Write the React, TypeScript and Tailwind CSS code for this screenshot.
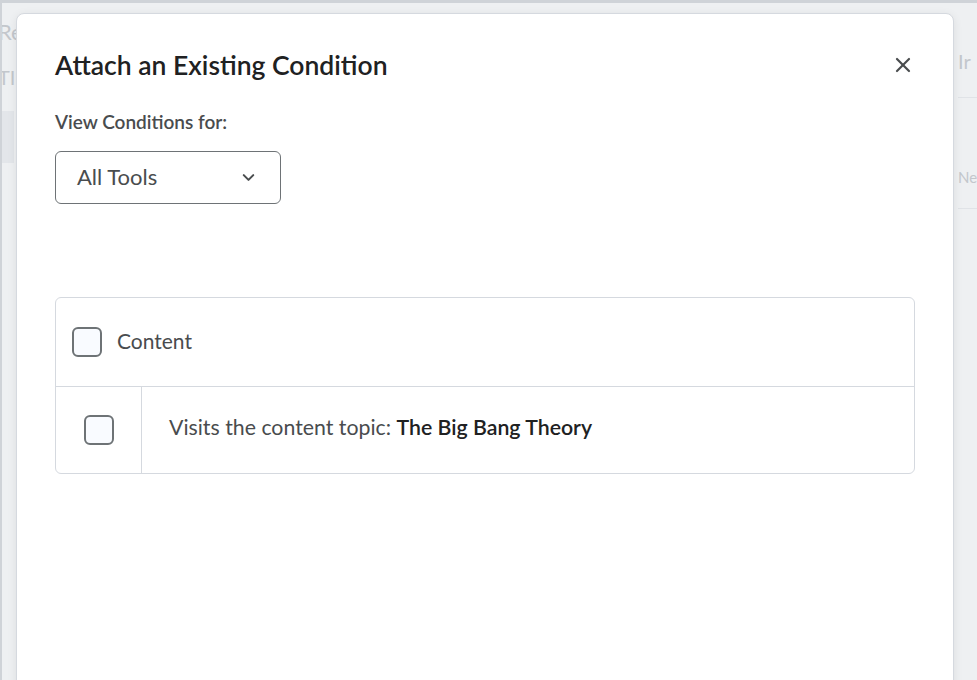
import { X, ChevronDown } from 'lucide-react';

const font = { fontFamily: 'Lato, "Open Sans", "Liberation Sans", sans-serif' };

const Checkbox = () => (
  <span className="inline-block h-[30px] w-[30px] shrink-0 rounded-[6px] border-2 border-[#6e7376] bg-[#f9fbff]" />
);

export default function App() {
  return (
    <div
      className="relative h-[680px] w-[977px] overflow-hidden border-l-2 border-t-[3px] border-[#cfd3d8] bg-[#eef0f2]"
      style={font}
    >
      {/* faded page behind the dialog */}
      <div className="flex h-full justify-between text-[#c3c7cc]">
        <div className="flex flex-col -ml-[4px]">
          <div className="mt-[16px] text-[22px] leading-[26px]">Re</div>
          <div className="mt-[20px] text-[20px] leading-[24px]">TI</div>
          <div className="mt-[22px] h-[52px] w-[16px] bg-[#e3e6ea]" />
        </div>
        <div className="flex flex-col items-start pl-[5px] w-[24px] overflow-hidden">
          <div className="mt-[46px] text-[20px] leading-[24px]">Ir</div>
          <div className="mt-[24px] h-[1px] w-full bg-[#e0e3e7]" />
          <div className="mt-[70px] text-[15px] leading-[18px]">Ne</div>
          <div className="mt-[22px] h-[1px] w-full bg-[#e0e3e7]" />
        </div>
      </div>

      {/* dialog */}
      <div className="absolute left-[14px] top-[10px] h-[720px] w-[938px] rounded-[8px] border border-[#d5d9df] bg-white shadow-[0_2px_10px_rgba(0,0,0,0.08)]">
        <div className="flex items-start justify-between pl-[38px] pr-[38px] pt-[35px]">
          <h1 className="text-[26.5px] font-semibold leading-[32px] text-[#202122]">
            Attach an Existing Condition
          </h1>
          <button className="mt-[4px] text-[#494c4e]">
            <X size={24} strokeWidth={2.2} />
          </button>
        </div>

        <div className="pl-[38px] pt-[29px]">
          <label className="block text-[19px] font-semibold leading-[24px] text-[#494c4e]">
            View Conditions for:
          </label>
          <div className="mt-[17px] flex h-[53px] w-[226px] items-center justify-between rounded-[6px] border border-[#6e7376] pl-[21px] pr-[22px] text-[22px] text-[#494c4e]">
            <span className="-mt-[3px]">All Tools</span>
            <ChevronDown size={19} strokeWidth={2.6} className="text-[#494c4e]" />
          </div>
        </div>

        <div className="ml-[38px] mr-[38px] mt-[93px] overflow-hidden rounded-[6px] border border-[#d5d9df]">
          <div className="flex h-[89px] items-center gap-[15px] border-b border-[#d5d9df] pl-[16px]">
            <Checkbox />
            <span className="-mt-[3px] text-[21px] text-[#494c4e]">Content</span>
          </div>
          <div className="flex h-[86px]">
            <div className="flex w-[86px] items-center justify-center border-r border-[#d5d9df] pl-[1px]">
              <Checkbox />
            </div>
            <div className="flex items-center pl-[27px] text-[21.3px] text-[#494c4e]">
              <span className="-mt-[5px]">
                Visits the content topic: <span className="font-semibold text-[#202122]">The Big Bang Theory</span>
              </span>
            </div>
          </div>
        </div>
      </div>
    </div>
  );
}
